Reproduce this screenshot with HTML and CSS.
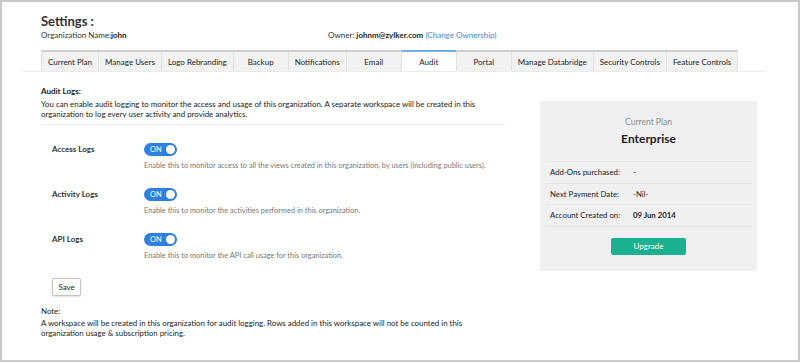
FILE: index.html
```html
<!DOCTYPE html>
<html lang="en">
<head>
  <meta charset="UTF-8">
  <title>Settings - Audit</title>
  <link rel="stylesheet" href="styles.css">
</head>
<body>

<div class="frame">

  <header class="head">
    <h1 class="title">Settings :</h1>
    <div class="meta">
      <div>Organization Name:<b>john</b></div>
      <div>Owner: <b>johnm@zylker.com</b> <a href="#" class="link">(Change Ownership)</a></div>
    </div>
  </header>

  <!-- tabs -->
  <nav class="tabbar">
    <div class="tabs">
      <a href="#" class="tab">Current Plan</a>
      <a href="#" class="tab">Manage Users</a>
      <a href="#" class="tab">Logo Rebranding</a>
      <a href="#" class="tab">Backup</a>
      <a href="#" class="tab">Notifications</a>
      <a href="#" class="tab">Email</a>
      <a href="#" class="tab active">Audit</a>
      <a href="#" class="tab">Portal</a>
      <a href="#" class="tab">Manage Databridge</a>
      <a href="#" class="tab">Security Controls</a>
      <a href="#" class="tab">Feature Controls</a>
    </div>
  </nav>

  <div class="body">
    <section class="main">
      <div class="intro">
        <h2 class="label">Audit Logs:</h2>
        <p>You can enable audit logging to monitor the access and usage of this organization. A separate workspace will be created in this organization to log every user activity and provide analytics.</p>
      </div>

      <div class="opts">
        <div class="opt">
          <div class="opt-name">Access Logs</div>
          <div>
            <span class="toggle">ON</span>
            <p class="hint">Enable this to monitor access to all the views created in this organization, by users (including public users).</p>
          </div>
        </div>
        <div class="opt">
          <div class="opt-name">Activity Logs</div>
          <div>
            <span class="toggle">ON</span>
            <p class="hint">Enable this to monitor the activities performed in this organization.</p>
          </div>
        </div>
        <div class="opt">
          <div class="opt-name">API Logs</div>
          <div>
            <span class="toggle">ON</span>
            <p class="hint">Enable this to monitor the API call usage for this organization.</p>
          </div>
        </div>
      </div>

      <button class="btn-save">Save</button>

      <div class="note">
        <h3 class="note-title">Note:</h3>
        <p>A workspace will be created in this organization for audit logging. Rows added in this workspace will not be counted in this organization usage &amp; subscription pricing.</p>
      </div>
    </section>

    <aside class="plan">
      <div class="plan-head">
        <div class="plan-sub">Current Plan</div>
        <div class="plan-name">Enterprise</div>
      </div>
      <div class="plan-row"><span class="k">Add-Ons purchased:</span><span>-</span></div>
      <div class="plan-row"><span class="k">Next Payment Date:</span><span>-Nil-</span></div>
      <div class="plan-row"><span class="k">Account Created on:</span><span class="strong">09 Jun 2014</span></div>
      <div class="plan-foot">
        <button class="btn-upgrade">Upgrade</button>
      </div>
    </aside>
  </div>

</div>

</body>
</html>
```

FILE: styles.css
```css
* { box-sizing: border-box; }
body { margin: 0; font-family: Lato, "Open Sans", sans-serif; color: #222; }
p, h1, h2, h3 { margin: 0; }
a { text-decoration: none; }

.frame { width: 800px; height: 362px; border: 2px solid #c9c9c9; overflow: hidden; }

/* header */
.head { padding: 11px 0 0 39px; }
.title { font-size: 13px; font-weight: bold; color: #333; line-height: 17px; }
.meta { display: grid; grid-template-columns: 287px auto; font-size: 8px; line-height: 12px; color: #333; margin-top: -1px; }
.meta b { color: #222; }
.link { color: #3b8ae6; }

/* tabs */
.tabbar { margin: 9px 0 0 21px; width: 742px; border-bottom: 1px solid #ebebeb; }
.tabs { display: flex; margin-left: 18px; }
.tab { min-width: 55px; height: 21px; padding: 0 6px; display: flex; align-items: center; justify-content: center;
  background: #f2f2f2; border-top: 2px solid #cfcfcf; border-left: 1px solid #e0e0e0; font-size: 8px; color: #222; }
.tab:last-child { border-right: 1px solid #e0e0e0; }
.tab.active { background: #fff; border-top-color: #7aaee9; }

/* body */
.body { display: flex; padding-left: 39px; }
.main { width: 464px; flex-shrink: 0; }
.intro { padding: 13px 0 5px; border-bottom: 1px solid #eee; }
.label { font-size: 8px; font-weight: bold; line-height: 12px; }
.intro p { font-size: 7.9px; line-height: 10px; margin-top: 2px; }

.opts { padding-top: 18px; }
.opt { display: flex; padding-left: 11px; }
.opt + .opt { margin-top: 17px; }
.opt-name { width: 92px; flex-shrink: 0; font-size: 8px; font-weight: bold; color: #333; line-height: 13px; }
.toggle { position: relative; display: block; width: 33px; height: 13px; border-radius: 7px; background: #2f7fdf;
  color: #fff; font-size: 7.5px; line-height: 13px; padding-left: 6px; }
.toggle::after { content: ""; position: absolute; right: 2px; top: 2px; width: 9px; height: 9px; border-radius: 50%; background: #fff; }
.hint { font-size: 7.4px; color: #777; margin-top: 5px; line-height: 10px; }

.btn-save { display: block; margin: 17px 0 0 11px; height: 18px; width: 29px; padding: 0; background: #fff; border: 1px solid #c4c4c4;
  border-radius: 2px; box-shadow: 0 1px 2px rgba(0,0,0,.12); font-family: inherit; font-size: 7.8px; color: #222; }
.note { margin-top: 9px; padding-right: 12px; }
.note-title { font-size: 7.9px; font-weight: normal; line-height: 12px; }
.note p { font-size: 7.9px; line-height: 10px; margin-top: 1px; }

/* plan card */
.plan { margin: 29px 0 0 35px; width: 217px; height: 170px; background: #f0f0f2; padding: 0 5px; font-size: 7.8px; color: #222; }
.plan-head { text-align: center; height: 61px; padding-top: 15px; border-bottom: 1px solid #e4e4e6; }
.plan-sub { font-size: 8.5px; color: #8a8a8a; line-height: 12px; }
.plan-name { font-size: 12px; font-weight: bold; margin-top: 3px; }
.plan-row { display: flex; align-items: center; height: 21.5px; padding-left: 5px; border-bottom: 1px solid #e4e4e6; }
.plan-row .k { width: 83px; }
.strong { font-weight: bold; }
.plan-foot { text-align: center; padding-top: 11px; }
.btn-upgrade { width: 75px; height: 17px; border: 0; border-radius: 2px; background: #1bb08f; color: #fff; font-family: inherit; font-size: 8px; }
```
